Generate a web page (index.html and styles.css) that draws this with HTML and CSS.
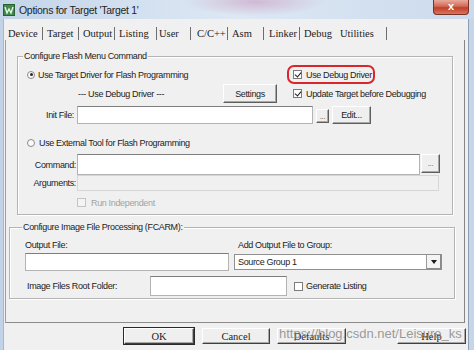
FILE: index.html
```html
<!DOCTYPE html>
<html>
<head>
<meta charset="utf-8">
<link rel="stylesheet" href="styles.css">
</head>
<body>
<div class="window">
  <div class="titlebar">
    <svg class="appicon" viewBox="0 0 12 12"><rect x="0.5" y="0.5" width="11" height="11" fill="#3f8a4a" stroke="#2a5e33"/><path d="M2 3 L4 9 L6 5 L8 9 L10 3" fill="none" stroke="#e8f3e8" stroke-width="1.4"/></svg>
    <span class="title">Options for Target 'Target 1'</span>
    <span class="close">x</span>
  </div>
  <div class="dialog">
    <div class="tabs">
      <span class="tab">Device</span>
      <span class="tab">Target</span>
      <span class="tab">Output</span>
      <span class="tab">Listing</span>
      <span class="tab tab-user">User</span>
      <span class="tab tab-cpp">C/C++</span>
      <span class="tab">Asm</span>
      <span class="tab tab-linker">Linker</span>
      <span class="tab tab-noline">Debug</span>
      <span class="tab">Utilities</span>
    </div>
    <div class="panel">
      <div class="group g1">
        <span class="legend">Configure Flash Menu Command</span>
        <div class="row row-a">
          <div class="opt-left pad-radio">
            <span class="radio on"></span><span class="gap3">Use Target Driver for Flash Programming</span>
          </div>
          <div class="highlight">
            <span class="check on"></span><span class="gap4">Use Debug Driver</span>
          </div>
        </div>
        <div class="row row-b">
          <div class="opt-left pad-dash">
            <span>--- Use Debug Driver ---</span>
            <span class="btn btn-settings">Settings</span>
          </div>
          <div class="opt-right">
            <span class="check on"></span><span class="gap4">Update Target before Debugging</span>
          </div>
        </div>
        <div class="row row-c">
          <span class="lbl">Init File:</span>
          <span class="input in-init"></span>
          <span class="btn btn-dots">...</span>
          <span class="btn btn-edit">Edit...</span>
        </div>
        <div class="row row-d pad-radio">
          <span class="radio"></span><span class="gap4">Use External Tool for Flash Programming</span>
        </div>
        <div class="row row-e">
          <span class="lbl lbl-tight">Command:</span>
          <span class="input in-cmd"></span>
          <span class="btn btn-dots2">...</span>
        </div>
        <div class="row row-f">
          <span class="lbl lbl-tight">Arguments:</span>
          <span class="input disabled in-args"></span>
        </div>
        <div class="row row-g">
          <span class="check disabled"></span><span class="gap5 muted">Run Independent</span>
        </div>
      </div>
      <div class="group g2">
        <span class="legend legend2">Configure Image File Processing (FCARM):</span>
        <div class="grid2 r1">
          <span>Output File:</span>
          <span class="pad4">Add Output File to Group:</span>
        </div>
        <div class="grid2 r2">
          <span class="input in-out"></span>
          <span class="select"><span class="sel-text">Source Group 1</span><span class="sel-arrow"></span></span>
        </div>
        <div class="row r3">
          <span class="lbl-root">Image Files Root Folder:</span>
          <span class="input in-root"></span>
          <span class="check gen"></span><span class="gap3">Generate Listing</span>
        </div>
      </div>
    </div>
    <div class="buttons">
      <span class="btn bbtn b-ok">OK</span>
      <span class="btn bbtn b-cancel">Cancel</span>
      <span class="btn bbtn b-def">Defaults</span>
      <span class="btn bbtn b-help">Help</span>
    </div>
  </div>
  <div class="watermark">https://blog.csdn.net/Leisure_ks</div>
</div>
</body>
</html>
```

FILE: styles.css
```css
* { box-sizing: border-box; }
html, body { margin: 0; padding: 0; }
body {
  width: 474px; height: 350px; overflow: hidden;
  background: #c6d6e9;
  font-family: "Liberation Sans", Arial, sans-serif;
  font-size: 9px;
  letter-spacing: -0.35px;
  color: #1c1c1c;
}
.window {
  position: relative;
  width: 474px; height: 350px;
  background: linear-gradient(90deg, #c2d3e8, #d6e2f0 55%, #c6d6ea);
}
.titlebar {
  height: 19px;
  display: flex; align-items: center;
  padding-left: 3px;
  background:
    radial-gradient(ellipse 70px 14px at 255px 2px, rgba(205, 170, 200, 0.75), rgba(205,170,200,0) 100%),
    linear-gradient(90deg, #c4d5e9, #dde8f4 50%, #cbdaec);
}
.appicon { width: 12px; height: 12px; flex: none; }
.title {
  margin-left: 4px;
  font-size: 10.5px;
  letter-spacing: -0.3px;
  color: #1e1e1e;
}
.close {
  margin-left: auto; margin-right: 5px;
  align-self: flex-start;
  width: 36px; height: 15px;
  border: 1px solid #7a3327; border-top: none;
  border-radius: 0 0 4px 4px;
  background: linear-gradient(#e8aa9c, #d26a55 45%, #c0402b 55%, #d9745c);
  color: #fff; font-weight: bold; letter-spacing: 0;
  font-size: 11px; line-height: 13px; text-align: center;
}
.dialog {
  margin-left: 3px;
  width: 466px; height: 331px;
  background: #f0f0f0;
  border-left: 1px solid #a9b8cc;
  border-right: 1px solid #8e9db2;
}
.tabs {
  display: grid;
  grid-template-columns: 39px 36px 36px 42px 34px 37px 36px 36px 36px 51px;
  height: 21px;
  align-items: end;
}
.tab {
  height: 13px; line-height: 13px;
  border-right: 1px solid #6e6e6e;
  padding-left: 4px;
  font-family: "Liberation Serif", serif;
  font-size: 10.5px;
  letter-spacing: 0;
  color: #222;
  white-space: nowrap;
}
.tab-user { padding-left: 2px; }
.tab-cpp { padding-left: 6px; }
.tab-linker { padding-left: 5px; }
.tab-noline { border-right-color: transparent; }
.panel {
  margin-left: 1px;
  width: 460px; height: 283px;
  border-left: 1px solid #a0a0a0;
  border-right: 1px solid #858585;
  border-bottom: 1px solid #8c8c8c;
  display: flex; flex-direction: column;
}
.group {
  position: relative;
  border: 1px solid #b4b4b4;
  box-shadow: inset 1px 1px 0 #fff, 1px 1px 0 #fff;
}
.legend {
  position: absolute; top: -7px; left: 5px;
  padding: 0 1px;
  background: #f0f0f0;
  line-height: 12px;
  white-space: nowrap;
}
.legend2 { left: 12px; }
.g1 { margin: 16px 0 0 11px; width: 436px; height: 159px; }
.g2 { margin: 12px 0 0 3px; width: 446px; height: 72px; }

.row { display: flex; align-items: center; white-space: nowrap; }
.row-a { height: 19px; margin-top: 8px; }
.row-b { height: 19px; }
.row-c { height: 18px; margin-top: 3px; }
.row-d { height: 17px; margin-top: 10px; }
.row-e { height: 21px; margin-top: 3px; align-items: stretch; }
.row-f { height: 16px; align-items: stretch; }
.row-g { height: 13px; margin-top: 5px; padding-left: 59px; }

.opt-left { width: 269px; display: flex; align-items: center; height: 100%; }
.pad-radio { padding-left: 9px; }
.pad-dash { padding-left: 60px; }
.opt-right { display: flex; align-items: center; padding-left: 6px; }
.highlight {
  width: 88px; height: 19px;
  border: 2px solid #d8262c;
  border-radius: 7px;
  display: flex; align-items: center;
  padding-left: 4px;
}
.gap3 { margin-left: 3px; }
.gap4 { margin-left: 4px; }
.gap5 { margin-left: 5px; }
.muted { color: #a2a2a2; }

.radio {
  position: relative;
  width: 8px; height: 8px; flex: none;
  border: 1px solid #8a8a8a; border-radius: 50%;
  background: #fafafa;
}
.radio.on::after {
  content: ""; position: absolute; left: 1.5px; top: 1.5px;
  width: 3px; height: 3px; border-radius: 50%; background: #2a2a2a;
}
.check {
  position: relative;
  width: 9px; height: 9px; flex: none;
  border: 1px solid #7c7c7c;
  background: #fff;
}
.check.on::after {
  content: ""; position: absolute; left: 2px; top: 0px;
  width: 3px; height: 5px;
  border: solid #1a1a1a; border-width: 0 1.6px 1.6px 0;
  transform: rotate(40deg);
}
.check.disabled { border-color: #c4c4c4; background: #f4f4f4; }

.btn {
  display: flex; align-items: center; justify-content: center;
  background: #efefef;
  border: 1px solid; border-color: #fff #5e5e5e #5e5e5e #fff;
  box-shadow: inset -1px -1px 0 #a8a8a8;
  color: #1c1c1c;
  flex: none;
}
.btn-settings { margin-left: auto; margin-right: 10px; width: 54px; height: 19px; }
.btn-dots { margin-left: 3px; width: 13px; height: 14px; align-self: flex-end; margin-bottom: 1px; font-size: 8px; color: #555; }
.btn-edit { margin-left: 3px; width: 39px; height: 18px; }
.btn-dots2 { margin-left: 1px; width: 19px; height: 19px; font-size: 8px; color: #555; }

.lbl { width: 59px; text-align: right; padding-right: 3px; flex: none; align-self: center; }
.lbl-tight { padding-right: 1px; }
.input {
  display: block; flex: none;
  background: #fff;
  border: 1px solid #b3b3b3;
  border-top-color: #7e7e7e;
}
.in-init { width: 236px; height: 18px; }
.in-cmd { width: 343px; height: 21px; }
.in-args { width: 362px; }
.input.disabled { background: #f0f0f0; border-color: #d6d6d6; }

.grid2 {
  display: grid;
  grid-template-columns: 209px 208px;
  padding-left: 15px;
  white-space: nowrap;
}
.r1 { margin-top: 11px; height: 13px; line-height: 13px; }
.r2 { margin-top: 1px; height: 18px; align-items: center; }
.pad4 { padding-left: 4px; }
.in-out { width: 204px; height: 18px; }
.select {
  height: 16px;
  display: flex; align-items: center;
  background: #fff;
  border: 1px solid #8f8f8f;
}
.sel-text { flex: 1; padding-left: 3px; }
.sel-arrow {
  position: relative;
  width: 15px; height: 14px;
  border-left: 1px solid #9a9a9a;
  background: #f4f4f4;
  box-shadow: inset -1px -1px 0 #8a8a8a;
}
.sel-arrow::after {
  content: ""; position: absolute; left: 4px; top: 5px;
  border-style: solid; border-width: 4px 3px 0 3px;
  border-color: #1a1a1a transparent transparent transparent;
}
.r3 { margin-top: 5px; height: 20px; padding-left: 15px; }
.lbl-root { width: 125px; padding-left: 2px; flex: none; }
.in-root { width: 137px; height: 20px; }
.gen { margin-left: 7px; }

.buttons { display: flex; margin-top: 5px; padding-left: 120px; }
.bbtn {
  height: 16px;
  font-family: "Liberation Serif", serif; font-size: 10.5px; letter-spacing: 0;
  border-color: #fff #404040 #404040 #fff;
}
.b-ok { width: 70px; outline: 1px solid #2a2a2a; }
.b-cancel { width: 68px; margin-left: 8px; }
.b-def { width: 69px; margin-left: 7px; }
.b-help { width: 69px; margin-left: 51px; }

.watermark {
  position: absolute; left: 279px; top: 326px;
  font-family: "Liberation Sans", sans-serif; font-size: 13px; line-height: 15px;
  letter-spacing: 0;
  color: rgba(130, 130, 130, 0.8);
  white-space: nowrap;
}
```
